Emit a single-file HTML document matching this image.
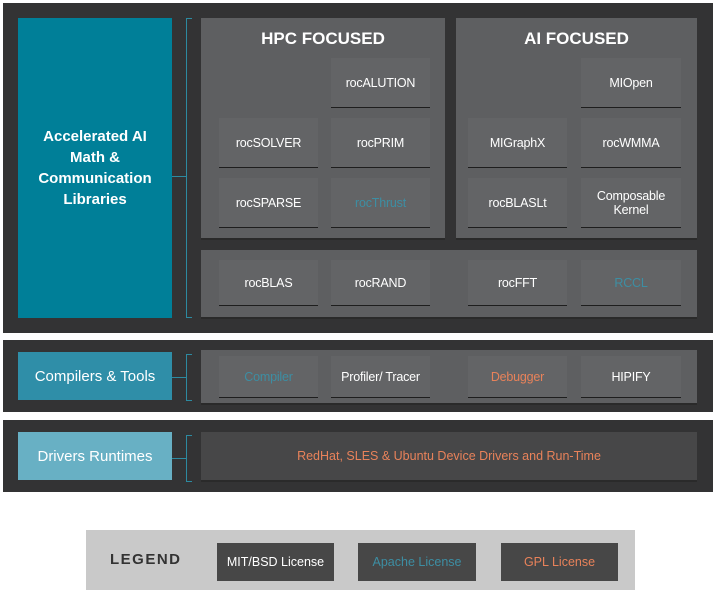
<!DOCTYPE html>
<html><head><style>
*{margin:0;padding:0;box-sizing:border-box}
body{width:717px;height:596px;background:#fff;position:relative;overflow:hidden;font-family:"Liberation Sans",sans-serif;}
.a{position:absolute}
.dk{background:#333334}
.pn{background:#5e5f61;box-shadow:0 2px 0 #2a2a2a}
.c{position:absolute;background:#636466;border-bottom:1px solid #1e1e1e;color:#fff;font-size:12.5px;display:flex;align-items:center;justify-content:center;text-align:center;line-height:14px;letter-spacing:-0.2px}
.t{color:#3d8ea3}.o{color:#e8825a}
.h{position:absolute;color:#fff;font-weight:bold;font-size:17px;text-align:center}
.lb{display:flex;align-items:center;justify-content:center;text-align:center;color:#fff}
.br{position:absolute;border:1px solid #2d8aa0;border-right:none;width:6px}
.tk{position:absolute;height:1px;background:#2d8aa0}
</style></head><body>
<div class="a dk" style="left:3px;top:3px;width:710px;height:330px"></div>
<div class="a dk" style="left:3px;top:340px;width:710px;height:72px"></div>
<div class="a dk" style="left:3px;top:420px;width:710px;height:72px"></div>

<div class="a lb" style="left:18px;top:18px;width:154px;height:300px;background:#007f98;font-size:15px;line-height:21px;font-weight:bold">Accelerated AI<br>Math &amp;<br>Communication<br>Libraries</div>
<div class="br" style="left:186px;top:18px;height:300px"></div>
<div class="tk" style="left:172px;top:176px;width:14px"></div>

<div class="a pn" style="left:201px;top:18px;width:244px;height:220px"></div>
<div class="h" style="left:201px;top:29px;width:244px">HPC FOCUSED</div>
<div class="a pn" style="left:456px;top:18px;width:241px;height:220px"></div>
<div class="h" style="left:456px;top:29px;width:241px">AI FOCUSED</div>
<div class="a pn" style="left:201px;top:250px;width:496px;height:67px"></div>

<div class="c" style="left:331px;top:58px;width:99px;height:50px">rocALUTION</div>
<div class="c" style="left:219px;top:118px;width:99px;height:50px">rocSOLVER</div>
<div class="c" style="left:331px;top:118px;width:99px;height:50px">rocPRIM</div>
<div class="c" style="left:219px;top:178px;width:99px;height:50px">rocSPARSE</div>
<div class="c t" style="left:331px;top:178px;width:99px;height:50px">rocThrust</div>

<div class="c" style="left:581px;top:58px;width:100px;height:50px">MIOpen</div>
<div class="c" style="left:468px;top:118px;width:99px;height:50px">MIGraphX</div>
<div class="c" style="left:581px;top:118px;width:100px;height:50px">rocWMMA</div>
<div class="c" style="left:468px;top:178px;width:99px;height:50px">rocBLASLt</div>
<div class="c" style="left:581px;top:178px;width:100px;height:50px">Composable<br>Kernel</div>

<div class="c" style="left:219px;top:260px;width:99px;height:46px">rocBLAS</div>
<div class="c" style="left:331px;top:260px;width:99px;height:46px">rocRAND</div>
<div class="c" style="left:468px;top:260px;width:99px;height:46px">rocFFT</div>
<div class="c t" style="left:581px;top:260px;width:100px;height:46px">RCCL</div>

<div class="a lb" style="left:18px;top:352px;width:154px;height:48px;background:#2f8ea8;font-size:15px">Compilers &amp; Tools</div>
<div class="br" style="left:186px;top:354px;height:47px"></div>
<div class="tk" style="left:172px;top:377px;width:14px"></div>
<div class="a pn" style="left:201px;top:350px;width:496px;height:53px"></div>
<div class="c t" style="left:219px;top:356px;width:99px;height:42px">Compiler</div>
<div class="c" style="left:331px;top:356px;width:99px;height:42px">Profiler/ Tracer</div>
<div class="c o" style="left:468px;top:356px;width:99px;height:42px">Debugger</div>
<div class="c" style="left:581px;top:356px;width:100px;height:42px">HIPIFY</div>

<div class="a lb" style="left:18px;top:432px;width:154px;height:48px;background:#68b0c4;font-size:15px">Drivers Runtimes</div>
<div class="br" style="left:186px;top:435px;height:47px"></div>
<div class="tk" style="left:172px;top:458px;width:14px"></div>
<div class="a lb o" style="left:201px;top:432px;width:496px;height:48px;background:#474748;box-shadow:0 2px 0 #2a2a2a;font-size:12.5px;color:#e8825a">RedHat, SLES &amp; Ubuntu Device Drivers and Run-Time</div>

<div class="a" style="left:86px;top:530px;width:549px;height:60px;background:#c9c9c9"></div>
<div class="a" style="left:110px;top:551px;font-size:15px;font-weight:bold;color:#333;letter-spacing:1.5px">LEGEND</div>
<div class="a lb" style="left:217px;top:543px;width:117px;height:38px;background:#474747;font-size:12.5px">MIT/BSD License</div>
<div class="a lb t" style="left:358px;top:543px;width:118px;height:38px;background:#474747;font-size:12.5px;color:#3d8ea3">Apache License</div>
<div class="a lb o" style="left:501px;top:543px;width:117px;height:38px;background:#474747;font-size:12.5px;color:#e8825a">GPL License</div>
</body></html>
